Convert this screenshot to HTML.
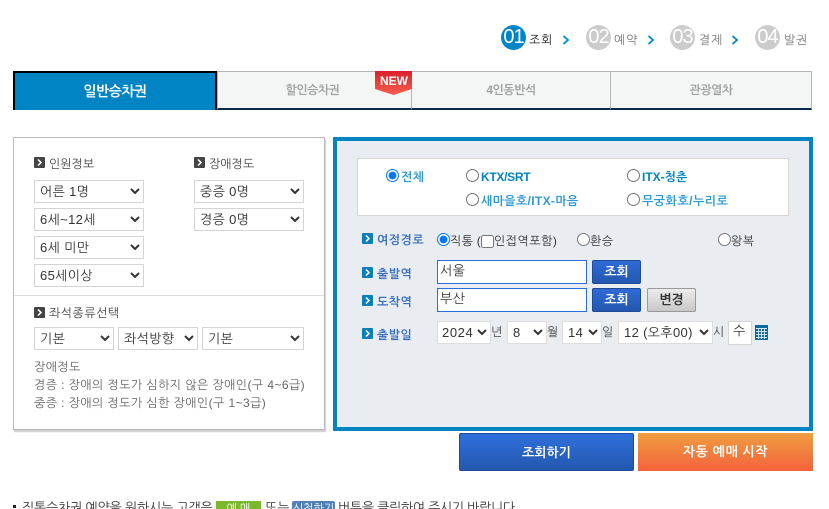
<!DOCTYPE html>
<html lang="ko"><head><meta charset="utf-8"><style>
html,body{margin:0;padding:0;width:829px;height:509px;overflow:hidden;background:#fff}
body{position:relative;font-family:"Liberation Sans","NanumGothic","Noto Sans CJK KR",sans-serif;font-size:12px;color:#444}
.a,select,input,.t{position:absolute}
.t{white-space:nowrap;line-height:14px}
select{box-sizing:border-box;height:23px;font:13px "Liberation Sans","NanumGothic","Noto Sans CJK KR",sans-serif;letter-spacing:.35px;background:#fff;border:1px solid #d4d4d4;color:#333;margin:0;padding:0 0 0 1px;border-radius:0}
input[type=radio],input[type=checkbox]{margin:0;width:13px;height:13px}
.c{width:25px;height:25px;border-radius:50%;background:#ccc;color:#fff;font-size:20px;line-height:25px;text-align:center;letter-spacing:-1px}
.tab{box-sizing:border-box;top:71px;height:39px;background:#f4f6f6;border:1px solid #b5b5b5;border-bottom:2px solid #0a2a4a;text-align:center;line-height:36px;color:#a0a0a0;font-weight:bold;font-size:12px;letter-spacing:-.5px}
.ic{width:11px;height:11px;background:#444;border-radius:1px}
.ic svg{display:block}
.ic.b{background:#0a7fb5}
.lb{color:#3a6fc0;font-weight:bold;font-size:12px;letter-spacing:.5px}
.bl{color:#2a9ad8;font-weight:bold;font-size:12px;letter-spacing:.35px}
.btn{box-sizing:border-box;background:linear-gradient(#2f6ad8,#2357ae);border:1px solid #1d4a94;border-radius:2px;color:#fff;font-weight:bold;text-align:center}
.ar{position:absolute;top:35px}
</style></head><body>
<div class="a c" style="left:501px;top:25px;background:#0084c8">01</div>
<div class="t" style="left:529px;top:33px;color:#222;letter-spacing:.9px">조회</div>
<svg class="ar" style="left:562px" width="8" height="10"><path d="M1.500 1L6 5L1.500 9" fill="none" stroke="#0084c8" stroke-width="1.800"/></svg>
<div class="a c" style="left:586px;top:25px">02</div>
<div class="t" style="left:614px;top:33px;color:#777;letter-spacing:.9px">예약</div>
<svg class="ar" style="left:647px" width="8" height="10"><path d="M1.500 1L6 5L1.500 9" fill="none" stroke="#0084c8" stroke-width="1.800"/></svg>
<div class="a c" style="left:670px;top:25px">03</div>
<div class="t" style="left:699px;top:33px;color:#777;letter-spacing:.9px">결제</div>
<svg class="ar" style="left:731px" width="8" height="10"><path d="M1.500 1L6 5L1.500 9" fill="none" stroke="#0084c8" stroke-width="1.800"/></svg>
<div class="a c" style="left:755px;top:25px">04</div>
<div class="t" style="left:784px;top:33px;color:#777;letter-spacing:.9px">발권</div>

<div class="a tab" style="left:217px;width:195px;padding-right:4px">할인승차권</div>
<div class="a tab" style="left:411px;width:200px">4인동반석</div>
<div class="a tab" style="left:610px;width:202px">관광열차</div>
<div class="a" style="box-sizing:border-box;left:13px;top:71px;width:204px;height:39px;background:#0084c4;border:2px solid #000;border-bottom:0;color:#fff;font-weight:bold;font-size:14px;text-align:center;line-height:36px;letter-spacing:-.5px">일반승차권</div>
<svg class="a" style="left:375px;top:71px" width="37" height="24"><defs><linearGradient id="g" x1="0" y1="0" x2="0" y2="1"><stop offset="0" stop-color="#d8222c"/><stop offset="1" stop-color="#f4604e"/></linearGradient></defs><path d="M0 0H37V18L18.500 24L0 18Z" fill="url(#g)"/></svg>
<div class="t" style="left:380px;top:74px;color:#fff;font-weight:bold;font-size:12px">NEW</div>

<div class="a" style="box-sizing:border-box;left:13px;top:137px;width:312px;height:293px;border:1px solid #bbb;box-shadow:1px 2px 1px #ccc"></div>
<div class="a" style="left:14px;top:295px;width:310px;height:1px;background:#ddd"></div>

<div class="a ic" style="left:34px;top:157px"><svg width="11" height="11"><path d="M4 2.500L7 5.500L4 8.500" fill="none" stroke="#fff" stroke-width="1.500"/></svg></div>
<div class="t" style="left:49px;top:157px">인원정보</div>
<div class="a ic" style="left:194px;top:157px"><svg width="11" height="11"><path d="M4 2.500L7 5.500L4 8.500" fill="none" stroke="#fff" stroke-width="1.500"/></svg></div>
<div class="t" style="left:209px;top:157px">장애정도</div>
<select style="left:34px;top:180px;width:110px"><option>어른 1명</option></select>
<select style="left:34px;top:208px;width:110px"><option>6세~12세</option></select>
<select style="left:34px;top:236px;width:110px"><option>6세 미만</option></select>
<select style="left:34px;top:264px;width:110px"><option>65세이상</option></select>
<select style="left:194px;top:180px;width:110px"><option>중증 0명</option></select>
<select style="left:194px;top:208px;width:110px"><option>경증 0명</option></select>

<div class="a ic" style="left:34px;top:307px"><svg width="11" height="11"><path d="M4 2.500L7 5.500L4 8.500" fill="none" stroke="#fff" stroke-width="1.500"/></svg></div>
<div class="t" style="left:49px;top:306px;letter-spacing:.5px">좌석종류선택</div>
<select style="left:34px;top:327px;width:80px"><option>기본</option></select>
<select style="left:118px;top:327px;width:80px"><option>좌석방향</option></select>
<select style="left:202px;top:327px;width:102px"><option>기본</option></select>
<div class="t" style="left:34px;top:360px;color:#666;letter-spacing:.42px">장애정도</div>
<div class="t" style="left:34px;top:378px;color:#666;letter-spacing:.42px">경증 : 장애의 정도가 심하지 않은 장애인(구 4~6급)</div>
<div class="t" style="left:34px;top:396px;color:#666;letter-spacing:.42px">중증 : 장애의 정도가 심한 장애인(구 1~3급)</div>

<div class="a" style="box-sizing:border-box;left:333px;top:137px;width:480px;height:294px;background:#e9edf2;border:4px solid #0084c4"></div>
<div class="a" style="box-sizing:border-box;left:357px;top:158px;width:432px;height:58px;background:#fff;border:1px solid #d5d5d5"></div>

<input type="radio" name="k" checked style="left:386px;top:169px">
<div class="t bl" style="left:401px;top:170px">전체</div>
<input type="radio" name="k" style="left:466px;top:169px">
<div class="t" style="left:481px;top:170px;color:#0084c4;font-weight:bold;letter-spacing:-.3px">KTX/SRT</div>
<input type="radio" name="k" style="left:627px;top:169px">
<div class="t" style="left:642px;top:170px;color:#0084c4;font-weight:bold">ITX-청춘</div>
<input type="radio" name="k" style="left:466px;top:193px">
<div class="t bl" style="left:481px;top:194px">새마을호/ITX-마음</div>
<input type="radio" name="k" style="left:627px;top:193px">
<div class="t bl" style="left:642px;top:194px;letter-spacing:.5px">무궁화호/누리로</div>

<div class="a ic b" style="left:362px;top:233px"><svg width="11" height="11"><path d="M4 2.500L7 5.500L4 8.500" fill="none" stroke="#fff" stroke-width="1.500"/></svg></div>
<div class="t lb" style="left:377px;top:233px">여정경로</div>
<input type="radio" name="r" checked style="left:437px;top:233px">
<div class="t" style="left:450px;top:234px;color:#333;letter-spacing:.3px">직통 (</div>
<input type="checkbox" style="left:481px;top:235px">
<div class="t" style="left:494px;top:234px;color:#333;letter-spacing:.5px">인접역포함)</div>
<input type="radio" name="r" style="left:577px;top:233px">
<div class="t" style="left:590px;top:234px;color:#333;letter-spacing:.5px">환승</div>
<input type="radio" name="r" style="left:718px;top:233px">
<div class="t" style="left:731px;top:234px;color:#333;letter-spacing:.5px">왕복</div>

<div class="a ic b" style="left:362px;top:267px"><svg width="11" height="11"><path d="M4 2.500L7 5.500L4 8.500" fill="none" stroke="#fff" stroke-width="1.500"/></svg></div>
<div class="t lb" style="left:377px;top:267px">출발역</div>
<div class="a ic b" style="left:362px;top:295px"><svg width="11" height="11"><path d="M4 2.500L7 5.500L4 8.500" fill="none" stroke="#fff" stroke-width="1.500"/></svg></div>
<div class="t lb" style="left:377px;top:295px">도착역</div>
<div class="a ic b" style="left:362px;top:328px"><svg width="11" height="11"><path d="M4 2.500L7 5.500L4 8.500" fill="none" stroke="#fff" stroke-width="1.500"/></svg></div>
<div class="t lb" style="left:377px;top:328px">출발일</div>

<div class="a" style="box-sizing:border-box;left:437px;top:260px;width:150px;height:24px;background:#fff;border:1px solid #2a70d8;padding-left:2px;line-height:19px;font-size:13px;color:#333;letter-spacing:.5px">서울</div>
<div class="a" style="box-sizing:border-box;left:437px;top:288px;width:150px;height:24px;background:#fff;border:1px solid #2a70d8;padding-left:2px;line-height:19px;font-size:13px;color:#333;letter-spacing:.5px">부산</div>
<div class="a btn" style="left:592px;top:260px;width:49px;height:24px;line-height:22px;font-size:13px">조회</div>
<div class="a btn" style="left:592px;top:288px;width:49px;height:24px;line-height:22px;font-size:13px">조회</div>
<div class="a" style="box-sizing:border-box;left:647px;top:288px;width:49px;height:24px;line-height:22px;background:linear-gradient(#ececec,#c8c8c8);border:1px solid #999;border-radius:2px;color:#333;font-weight:bold;text-align:center;font-size:13px">변경</div>

<select style="left:437px;top:321px;width:54px;padding-left:0;border-color:#ddd;letter-spacing:.6px"><option>2024</option></select>
<div class="t" style="left:491px;top:325px">년</div>
<select style="left:507px;top:321px;width:40px;border-color:#ddd"><option>8</option></select>
<div class="t" style="left:547px;top:325px">월</div>
<select style="left:562px;top:321px;width:40px;border-color:#ddd"><option>14</option></select>
<div class="t" style="left:602px;top:325px">일</div>
<select style="left:618px;top:321px;width:95px;border-color:#ddd"><option>12 (오후00)</option></select>
<div class="t" style="left:713px;top:325px">시</div>
<div class="a" style="box-sizing:border-box;left:728px;top:321px;width:24px;height:24px;background:#fff;border:1px solid #d4d4d4;font-size:13px;color:#333;padding-left:4px;line-height:18px">수</div>
<svg class="a" style="left:755px;top:325px" width="13" height="15"><rect width="13" height="15" fill="#0a6a9a"/><path d="M1 3.500H12M1 6.500H12M1 9.500H12M1 12.500H12M3.500 3V14M6.500 3V14M9.500 3V14" stroke="#cfe3ee" stroke-width="1"/></svg>

<div class="a btn" style="left:459px;top:433px;width:175px;height:38px;line-height:38px;font-size:13px;background:linear-gradient(#2f6fdc,#2358ae)">조회하기</div>
<div class="a" style="box-sizing:border-box;left:638px;top:433px;width:175px;height:38px;line-height:38px;font-size:13px;font-weight:bold;color:#fff;text-align:center;background:linear-gradient(#ef9e40,#f4623c);letter-spacing:.6px">자동 예매 시작</div>

<div class="a" style="left:13px;top:505px;width:3px;height:3px;background:#222"></div>
<div class="t" style="left:22px;top:501px;color:#333;font-size:13px;letter-spacing:-.2px">직통승차권 예약을 원하시는 고객은</div>
<div class="a" style="left:216px;top:501px;width:45px;height:12px;background:#7ab82e;color:#fff;text-align:center;font-size:11px;line-height:16px">예 매</div>
<div class="t" style="left:265px;top:501px;color:#333;font-size:13px">또는</div>
<div class="a" style="left:292px;top:501px;width:43px;height:12px;background:#4f80b8;color:#fff;text-align:center;font-size:11px;line-height:16px;border-radius:2px">신청하기</div>
<div class="t" style="left:338px;top:501px;color:#333;font-size:13px;letter-spacing:-.3px">버튼을 클릭하여 주시기 바랍니다.</div>
</body></html>
